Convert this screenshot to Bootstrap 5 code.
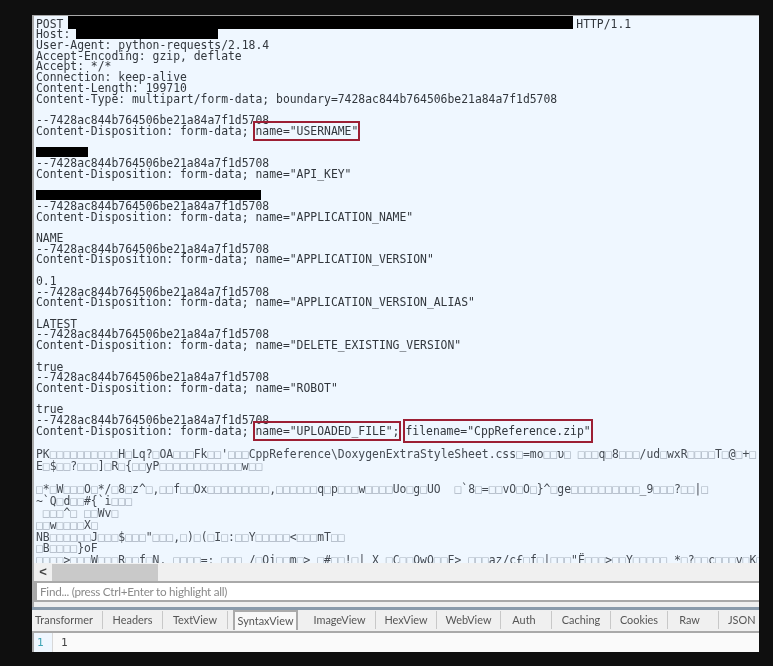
<!DOCTYPE html>
<html lang="en">
<head>
<meta charset="utf-8">
<title>Request</title>
<link href="https://cdn.jsdelivr.net/npm/bootstrap@5.3.0/dist/css/bootstrap.min.css" rel="stylesheet">
<style>
html,body{height:100%;overflow:hidden}
body{background:#0f0f0f;padding:15px 14px 14px 32px}
.shot{height:637px;width:727px;background:#f0f0f0;border-top:1px solid #a8a8a8;border-left:2px solid #a8a8a8;filter:blur(.35px)}
.editor{height:547px;flex:none;background:#eff7ff;overflow:hidden;padding:2.6px 0 0 2px;font-family:"DejaVu Sans Mono",monospace;font-size:11.4px;line-height:10.73px;color:#32373d}
.ln{height:10.73px;white-space:pre}
.bin{height:11.9px;line-height:11.9px;color:#454b53;white-space:pre}
.bin .tf{color:#a9b4c0}
.gap{height:12.6px}
.spacer{height:11px}
.redact{display:inline-block;background:#000;vertical-align:top;height:10px}
.r1{width:505px;margin-left:-2px;margin-right:3px;height:13px;margin-top:-3px}
.r2{width:142px;margin-left:-1px}
.r3{width:52px}
.r4{width:225px}
.mk{outline:2px solid #9c1f34;outline-offset:0;padding:1px 0}
.mk2{padding:3px 0;margin-left:6px}
.hbar{height:18px;flex:none;background:#f0f0f0}
.arrow{width:18px;font:700 13px/18px "Liberation Sans",sans-serif;color:#444;text-align:center}
.thumb{width:106px;height:17px;background:#c9c9c9}
.findwrap{height:21px;flex:none;background:#fff;border:2px solid #a9a9a9;border-left-width:3px;border-right:0}
.find{font:11.7px/16px "Lato",sans-serif;color:#8a8a8a;padding-left:3px;letter-spacing:-.25px}
.tabs{height:24px;flex:none;border-top:3px solid #8a9bab;margin-top:5px;margin-left:-2px;background:#f0f0f0;font:10.9px/17px "Lato",sans-serif;color:#555}
.tabby{border-right:1px solid #c8c8c8;text-align:center;height:18px;margin-top:1px}
.tabby.on{border:2px solid #aaa;border-bottom:0;background:#f8f8f8;height:20px;margin-left:5px;margin-right:6px;margin-top:0}
.t1{width:71px;padding-right:6px}.t2{width:60px}.t3{width:65px}.t4{width:65px}.t5{width:72px}.t6{width:61px}.t7{width:64px}.t8{width:51px;padding-right:4px}.t9{width:59px}.t10{width:57px}.t11{width:51px;padding-right:7px}.t12{width:39px;border-right:0;padding-left:9px;text-align:left}
.bottom{height:21px;flex:none;background:#fafafa;border-top:2px solid #a9a9a9;font:11px/19px "DejaVu Sans Mono",monospace}
.gutter{width:19px;background:#eff7ff;color:#3fa5b5;padding-left:3px;border-right:1px solid #d8d8d8}
.code{padding-left:8px;color:#444}
</style>
</head>
<body>
<div class="shot d-flex flex-column">
  <div class="editor">
<div class="ln">POST <span class="redact r1"></span>HTTP/1.1</div>
<div class="ln">Host: <span class="redact r2"></span></div>
<div class="ln">User-Agent: python-requests/2.18.4</div>
<div class="ln">Accept-Encoding: gzip, deflate</div>
<div class="ln">Accept: */*</div>
<div class="ln">Connection: keep-alive</div>
<div class="ln">Content-Length: 199710</div>
<div class="ln">Content-Type: multipart/form-data; boundary=7428ac844b764506be21a84a7f1d5708</div>
<div class="ln"></div>
<div class="ln">--7428ac844b764506be21a84a7f1d5708</div>
<div class="ln">Content-Disposition: form-data; <span class="mk">name="USERNAME"</span></div>
<div class="ln"></div>
<div class="ln"><span class="redact r3"></span></div>
<div class="ln">--7428ac844b764506be21a84a7f1d5708</div>
<div class="ln">Content-Disposition: form-data; name="API_KEY"</div>
<div class="ln"></div>
<div class="ln"><span class="redact r4"></span></div>
<div class="ln">--7428ac844b764506be21a84a7f1d5708</div>
<div class="ln">Content-Disposition: form-data; name="APPLICATION_NAME"</div>
<div class="ln"></div>
<div class="ln">NAME</div>
<div class="ln">--7428ac844b764506be21a84a7f1d5708</div>
<div class="ln">Content-Disposition: form-data; name="APPLICATION_VERSION"</div>
<div class="ln"></div>
<div class="ln">0.1</div>
<div class="ln">--7428ac844b764506be21a84a7f1d5708</div>
<div class="ln">Content-Disposition: form-data; name="APPLICATION_VERSION_ALIAS"</div>
<div class="ln"></div>
<div class="ln">LATEST</div>
<div class="ln">--7428ac844b764506be21a84a7f1d5708</div>
<div class="ln">Content-Disposition: form-data; name="DELETE_EXISTING_VERSION"</div>
<div class="ln"></div>
<div class="ln">true</div>
<div class="ln">--7428ac844b764506be21a84a7f1d5708</div>
<div class="ln">Content-Disposition: form-data; name="ROBOT"</div>
<div class="ln"></div>
<div class="ln">true</div>
<div class="ln">--7428ac844b764506be21a84a7f1d5708</div>
<div class="ln">Content-Disposition: form-data; <span class="mk">name="UPLOADED_FILE";</span><span class="mk mk2">filename="CppReference.zip"</span></div>
<div class="gap"></div>
<div class="bin">PK□□□□□□□□□□H□Lq?□OA□□□Fk□□'□□□CppReference\DoxygenExtraStyleSheet.css□=mo□□υ□ □□□q□8□□□/ud□wxR□□□□T□@□+□</div>
<div class="bin">E□$□□?□□□]□R□{□□yP□□□□□□□□□□□□w□□</div>
<div class="spacer"></div>
<div class="bin">□*□W□□□O□*/□8□z^□,□□f□□Ox□□□□□□□□□,□□□□□□q□p□□□w□□□□Uo□g□UO  □`8□=□□vO□O□}^□ge□□□□□□□□□□_9□□□?□□|□</div>
<div class="bin">~`Q□d□□#{`i□□□</div>
<div class="bin"> □□□^□ □□Wv□</div>
<div class="bin">□□w□□□□X□</div>
<div class="bin">NB□□□□□□J□□□$□□□"□□□,□)□(□I□:□□Y□□□□□&lt;□□□mT□□</div>
<div class="bin">□B□□□□}oF</div>
<div class="bin">□□□□&gt;□□□W□□□R□□f□N. □□□□=; □□□ /□Qi□□m□&gt; □#□□!□| X □C□□OwO□□F&gt; □□□az/c£□f□|□□□"Ё□□□&gt;□□Y□□□□□ *□?□□c□□□v□K□</div>
  </div>
  <div class="hbar d-flex align-items-center">
    <div class="arrow">&lt;</div>
    <div class="thumb"></div>
  </div>
  <div class="findwrap"><div class="find">Find... (press Ctrl+Enter to highlight all)</div></div>
  <div class="tabs d-flex">
    <div class="tabby t1">Transformer</div>
    <div class="tabby t2">Headers</div>
    <div class="tabby t3">TextView</div>
    <div class="tabby on t4">SyntaxView</div>
    <div class="tabby t5">ImageView</div>
    <div class="tabby t6">HexView</div>
    <div class="tabby t7">WebView</div>
    <div class="tabby t8">Auth</div>
    <div class="tabby t9">Caching</div>
    <div class="tabby t10">Cookies</div>
    <div class="tabby t11">Raw</div>
    <div class="tabby t12">JSON</div>
  </div>
  <div class="bottom d-flex">
    <div class="gutter">1</div>
    <div class="code">1</div>
  </div>
</div>
<script>
document.querySelectorAll('.bin').forEach(function(b){b.innerHTML=b.innerHTML.replace(/□+/g,function(m){return '<span class="tf">'+m+'</span>';});});
</script>
<script src="https://cdn.jsdelivr.net/npm/bootstrap@5.3.0/dist/js/bootstrap.bundle.min.js"></script>
</body>
</html>
